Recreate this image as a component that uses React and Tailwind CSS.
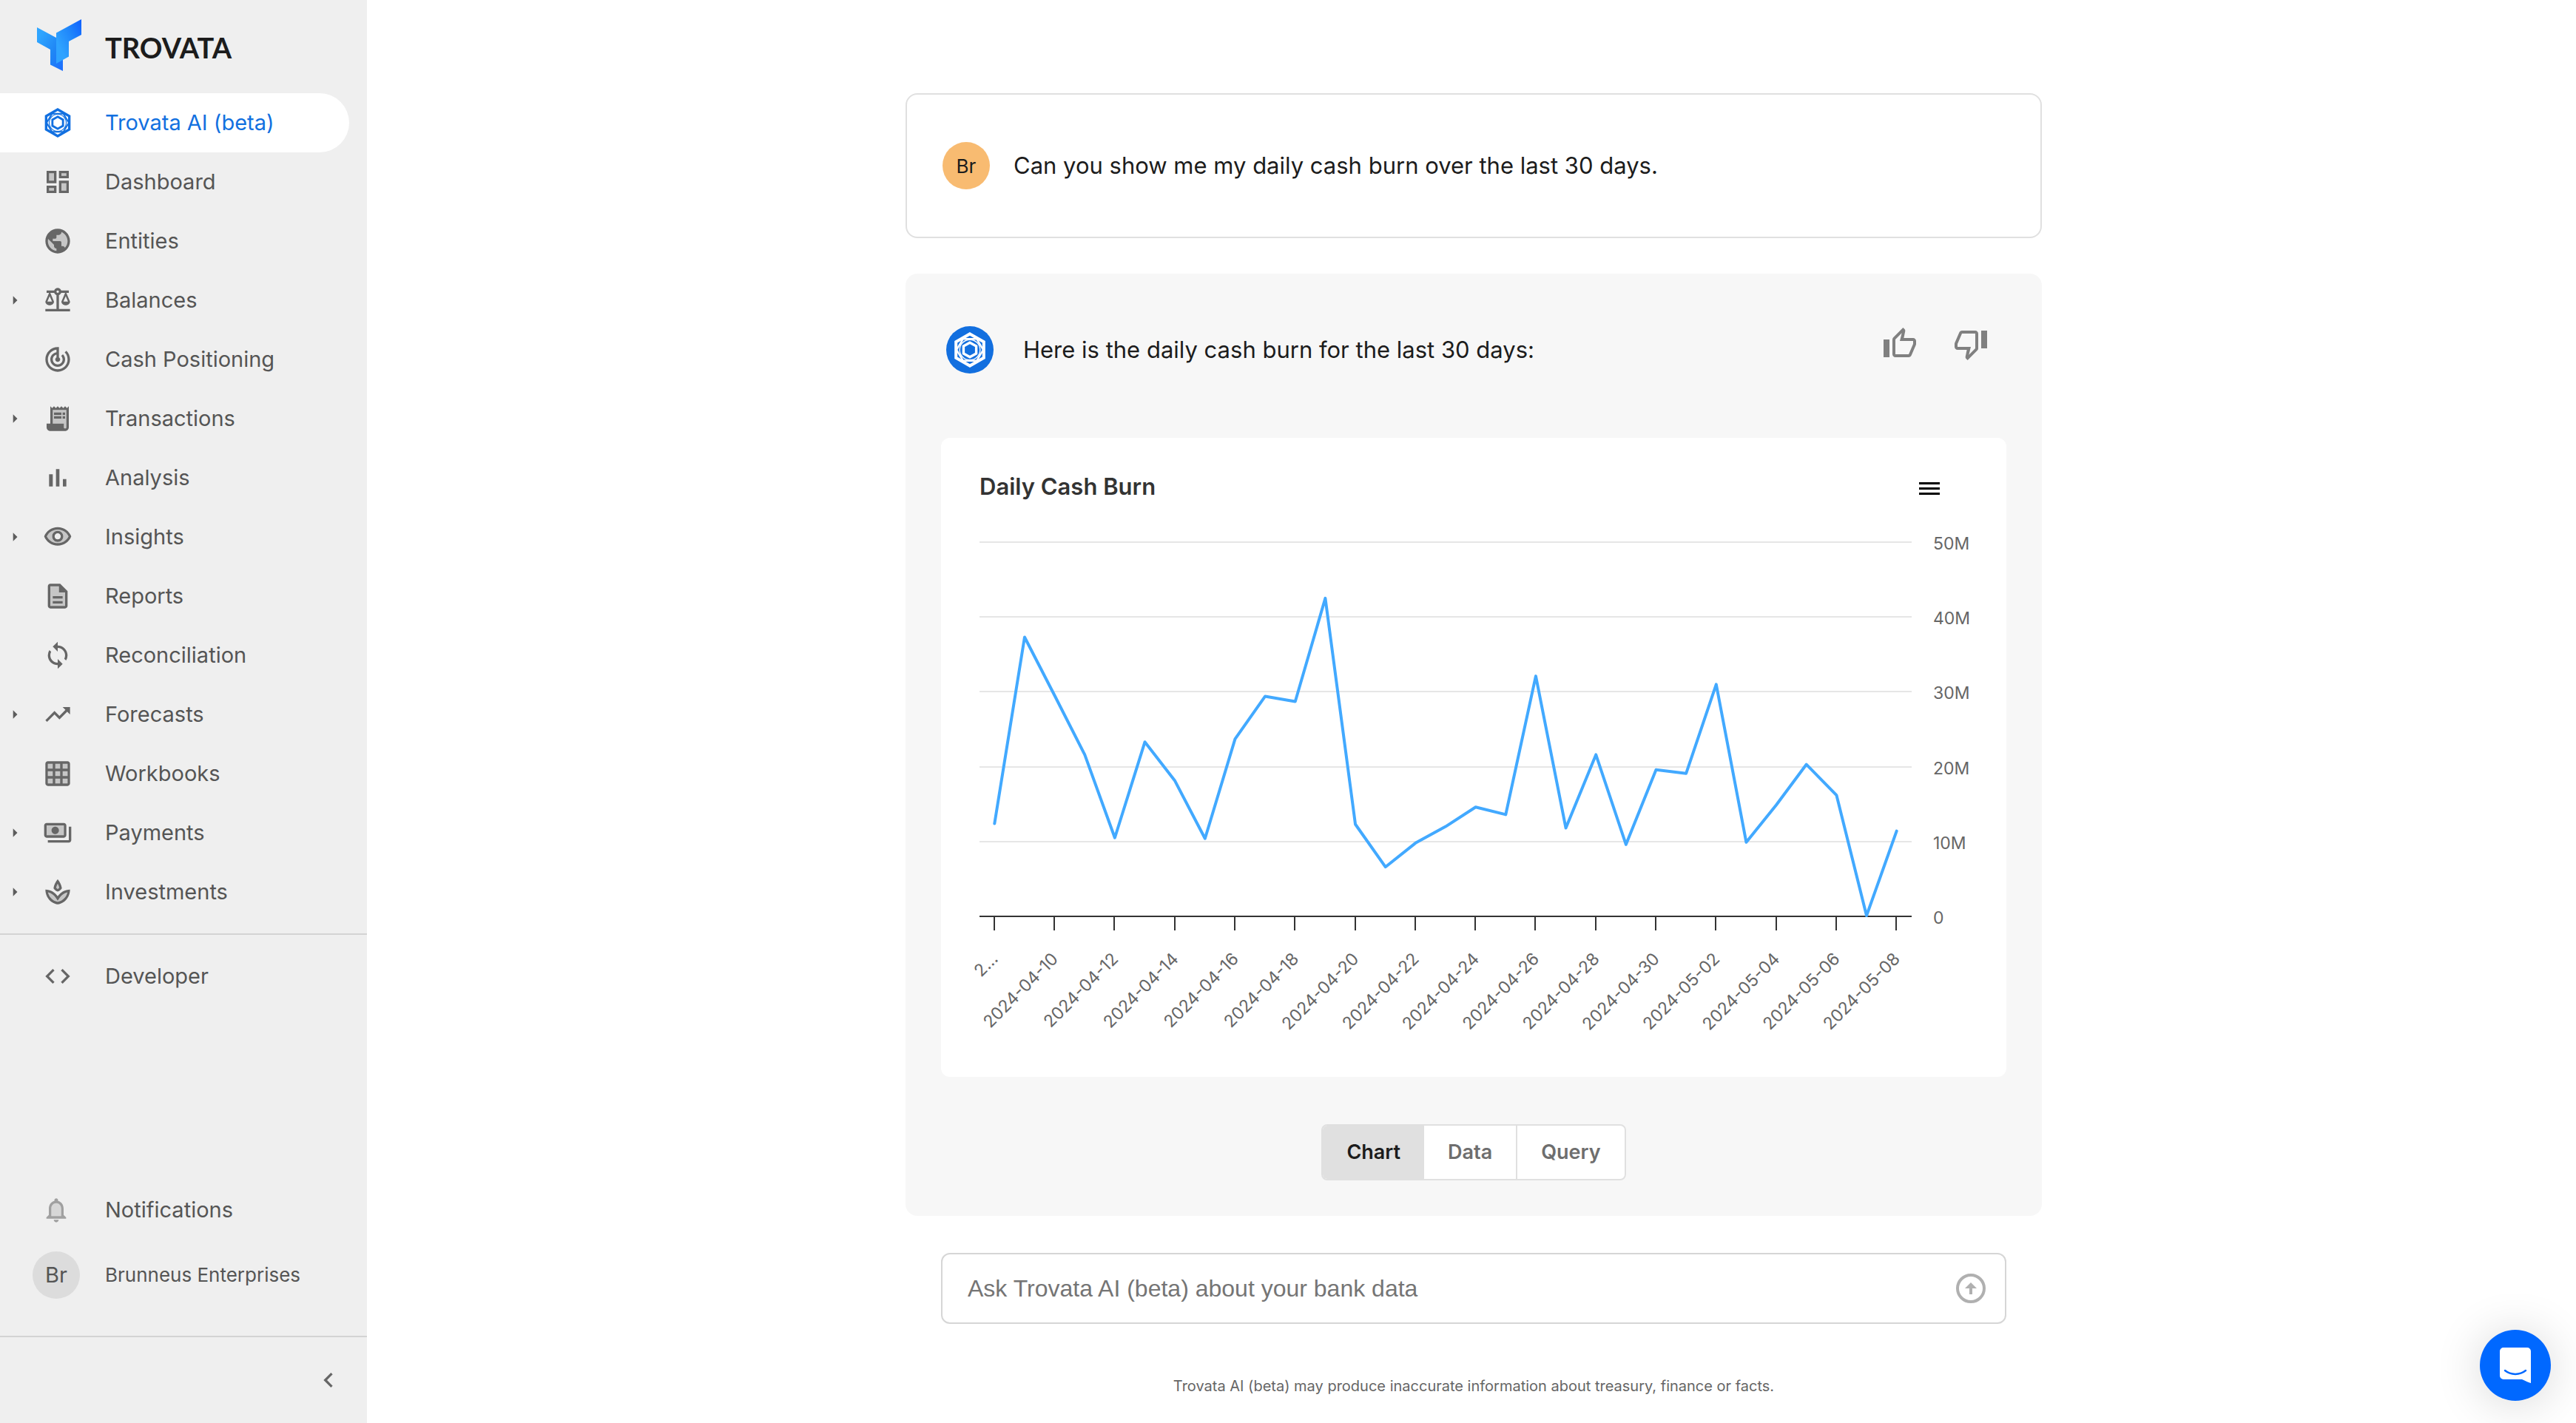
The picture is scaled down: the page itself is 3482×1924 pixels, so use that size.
import { useState } from 'react'
import {
    MdArrowRight,
    MdChevronLeft,
    MdCode,
    MdOutlineThumbDown,
    MdOutlineThumbUp,
    MdSync,
    MdTrackChanges,
    MdTrendingUp,
} from 'react-icons/md'

// Two tone icons on a 24px grid, "tone" is the light layer under "path"
const icons = {
    dashboard: {
        tone: 'M5 5h4v6H5zM15 5h4v2h-4zM15 13h4v6h-4zM5 17h4v2H5z',
        path: 'M19 5v2h-4V5h4M9 5v6H5V5h4m10 8v6h-4v-6h4M9 17v2H5v-2h4M21 3h-8v6h8V3zM11 3H3v10h8V3zm10 8h-8v10h8V11zm-10 4H3v6h8v-6z',
    },
    entities: {
        tone: 'M12 3a9 9 0 100 18 9 9 0 000-18z',
        path: 'M12 2C6.48 2 2 6.48 2 12s4.48 10 10 10 10-4.48 10-10S17.52 2 12 2zm-1 17.93c-3.95-.49-7-3.85-7-7.93 0-.62.08-1.21.21-1.79L9 15v1c0 1.1.9 2 2 2v1.93zm6.9-2.54c-.26-.81-1-1.39-1.9-1.39h-1v-3c0-.55-.45-1-1-1H8v-2h2c.55 0 1-.45 1-1V7h2c1.1 0 2-.9 2-2v-.41c2.93 1.19 5 4.06 5 7.41 0 2.08-.8 3.97-2.1 5.39z',
    },
    balances: {
        path: 'M13 7.83c.85-.3 1.53-.98 1.83-1.83H18l-3 7c0 1.66 1.57 3 3.5 3s3.5-1.34 3.5-3l-3-7h2V4h-6.17C14.42 2.83 13.31 2 12 2s-2.42.83-2.83 2H3v2h2l-3 7c0 1.66 1.57 3 3.5 3S9 14.66 9 13L6 6h3.17c.3.85.98 1.53 1.83 1.83V19H2v2h20v-2h-9V7.83zM20.37 13h-3.74l1.87-4.36L20.37 13zm-13 0H3.63L5.5 8.64 7.37 13zM12 6c-.55 0-1-.45-1-1s.45-1 1-1 1 .45 1 1-.45 1-1 1z',
    },
    transactions: {
        tone: 'M8 5h11v14c0 .55-.45 1-1 1s-1-.45-1-1v-3H8z',
        path: 'M19.5 3.5L18 2l-1.5 1.5L15 2l-1.5 1.5L12 2l-1.5 1.5L9 2 7.5 3.5 6 2v14H3v3c0 1.66 1.34 3 3 3h12c1.66 0 3-1.34 3-3V2l-1.5 1.5zM19 19c0 .55-.45 1-1 1s-1-.45-1-1v-3H8V5h11v14zM9 7h6v2H9zM16 7h2v2h-2zM9 10h6v2H9zM16 10h2v2h-2z',
    },
    analysis: {
        path: 'M5 9.2h3V19H5zM10.6 5h2.8v14h-2.8zM16.2 13H19v6h-2.8z',
    },
    insights: {
        tone: 'M12 6c-3.79 0-7.17 2.13-8.82 5.5C4.83 14.87 8.21 17 12 17s7.17-2.13 8.82-5.5C19.17 8.13 15.79 6 12 6zm0 10c-2.48 0-4.5-2.02-4.5-4.5S9.52 7 12 7s4.5 2.02 4.5 4.5S14.48 16 12 16z',
        path: 'M12 4C7 4 2.73 7.11 1 11.5 2.73 15.89 7 19 12 19s9.27-3.11 11-7.5C21.27 7.11 17 4 12 4zm0 13c-3.79 0-7.17-2.13-8.82-5.5C4.83 8.13 8.21 6 12 6s7.17 2.13 8.82 5.5C19.17 14.87 15.79 17 12 17zm0-10c-2.48 0-4.5 2.02-4.5 4.5S9.52 16 12 16s4.5-2.02 4.5-4.5S14.48 7 12 7zm0 7c-1.38 0-2.5-1.12-2.5-2.5S10.62 9 12 9s2.5 1.12 2.5 2.5S13.38 14 12 14z',
    },
    reports: {
        tone: 'M13 4H6v16h12V9h-5z',
        path: 'M8 16h8v2H8zm0-4h8v2H8zm6-10H6c-1.1 0-2 .9-2 2v16c0 1.1.89 2 1.99 2H18c1.1 0 2-.9 2-2V8l-6-6zm4 18H6V4h7v5h5v11z',
    },
    workbooks: {
        tone: 'M4 4h16v16H4z',
        path: 'M20 2H4c-1.1 0-2 .9-2 2v16c0 1.1.9 2 2 2h16c1.1 0 2-.9 2-2V4c0-1.1-.9-2-2-2zM8 20H4v-4h4v4zm0-6H4v-4h4v4zm0-6H4V4h4v4zm6 12h-4v-4h4v4zm0-6h-4v-4h4v4zm0-6h-4V4h4v4zm6 12h-4v-4h4v4zm0-6h-4v-4h4v4zm0-6h-4V4h4v4z',
    },
    payments: {
        tone: 'M3 6h14v8H3z',
        path: 'M19 14V6c0-1.1-.9-2-2-2H3c-1.1 0-2 .9-2 2v8c0 1.1.9 2 2 2h14c1.1 0 2-.9 2-2zm-2 0H3V6h14v8zm-7-7c-1.66 0-3 1.34-3 3s1.34 3 3 3 3-1.34 3-3-1.34-3-3-3zm13 0v11c0 1.1-.9 2-2 2H4v-2h17V7h2z',
    },
    investments: {
        tone: 'M4.2 11.2c3.6.7 6.4 2.9 7.8 6 1.4-3.1 4.2-5.3 7.8-6-.6 4.7-3.6 8-7.8 9-4.2-1-7.2-4.3-7.8-9zM12 5c-.9 1.3-1.5 2.6-1.6 3.9l1.6 1.3 1.6-1.3C13.5 7.6 12.9 6.3 12 5z',
        path: 'M12 1.6C10.1 3.9 9 6.4 8.6 9c.5.9 1.7 2.2 3.4 2.7 1.7-.5 2.9-1.8 3.4-2.7-.4-2.6-1.5-5.1-3.4-7.4zm0 3.6c.7 1.2 1.1 2.3 1.3 3.4L12 9.8l-1.3-1.2c.2-1.1.6-2.2 1.3-3.4zM12 15.5C9.9 12.3 6.2 10 2 10c0 5.3 3.2 9.8 7.6 11.4.8.3 1.6.5 2.4.6.8-.1 1.6-.3 2.4-.6C18.8 19.8 22 15.3 22 10c-4.2 0-7.9 2.3-10 5.5zm1.7 4c-.6.2-1.1.4-1.7.5-.6-.1-1.2-.3-1.7-.5-3.1-1.1-5.4-3.9-6.1-7.2 2.6.6 4.8 2.2 6.2 4.3L12 19l1.6-2.4c1.4-2.1 3.7-3.7 6.2-4.3-.7 3.3-3 6.1-6.1 7.2z',
    },
    notifications: {
        tone: 'M12 6c-2.48 0-4 2.02-4 4.5V17h8v-6.5C16 8.02 14.48 6 12 6z',
        path: 'M12 22c1.1 0 2-.9 2-2h-4c0 1.1.9 2 2 2zm6-6v-5c0-3.07-1.64-5.64-4.5-6.32V4c0-.83-.67-1.5-1.5-1.5s-1.5.67-1.5 1.5v.68C7.63 5.36 6 7.92 6 11v5l-2 2v1h16v-1l-2-2zm-2 1H8v-6c0-2.48 1.51-4.5 4-4.5s4 2.02 4 4.5v6z',
    },
}

const navItems = [
    { label: 'Trovata AI (beta)', icon: 'ai', active: true },
    { label: 'Dashboard', icon: 'dashboard' },
    { label: 'Entities', icon: 'entities' },
    { label: 'Balances', icon: 'balances', expandable: true },
    { label: 'Cash Positioning', Icon: MdTrackChanges },
    { label: 'Transactions', icon: 'transactions', expandable: true },
    { label: 'Analysis', icon: 'analysis' },
    { label: 'Insights', icon: 'insights', expandable: true },
    { label: 'Reports', icon: 'reports' },
    { label: 'Reconciliation', Icon: MdSync },
    { label: 'Forecasts', Icon: MdTrendingUp, expandable: true },
    { label: 'Workbooks', icon: 'workbooks' },
    { label: 'Payments', icon: 'payments', expandable: true },
    { label: 'Investments', icon: 'investments', expandable: true },
]

// Daily burn in millions, 2024-04-08 to 2024-05-08
const burn = [
    12.4, 37.3, 29.5, 21.6, 10.5, 23.3, 18.1, 10.4, 23.7, 29.4, 28.7, 42.5, 12.3, 6.6, 9.8, 12,
    14.6, 13.6, 32.1, 11.8, 21.6, 9.6, 19.6, 19.1, 31, 9.9, 14.9, 20.3, 16.2, 0.1, 11.4,
]

const ticks = [
    '2…', '2024-04-10', '2024-04-12', '2024-04-14', '2024-04-16', '2024-04-18', '2024-04-20', '2024-04-22',
    '2024-04-24', '2024-04-26', '2024-04-28', '2024-04-30', '2024-05-02', '2024-05-04', '2024-05-06', '2024-05-08',
]

const tabs = ['Chart', 'Data', 'Query']

function TwoToneIcon({ name, className }) {
    const { tone, path } = icons[name]
    return (
        <svg viewBox="0 0 24 24" fill="currentColor" className={className} aria-hidden="true">
            {tone && <path d={tone} opacity="0.3" />}
            <path d={path} />
        </svg>
    )
}

function AiIcon({ className }) {
    return (
        <svg viewBox="0 0 24 24" fill="none" stroke="currentColor" className={className} aria-hidden="true">
            <path d="M12 1.2l9.4 5.4v10.8L12 22.8l-9.4-5.4V6.6z" strokeWidth="2" />
            <path d="M7.4 4.6h9.2L21 12l-4.400 7.400H7.400L3 12z" strokeWidth="1.200" />
            <circle cx="12" cy="12" r="6.900" strokeWidth="0.700" />
            <path d="M12 7.100l4.300 2.450v4.900L12 16.900l-4.300-2.450v-4.900z" strokeWidth="1.700" />
        </svg>
    )
}

function Logo() {
    return (
        <svg viewBox="0 0 60 70" className="h-[70px] w-[60px] shrink-0" aria-hidden="true">
            <defs>
                <linearGradient id="logo-left" x1="0" y1="0" x2="1" y2="1">
                    <stop offset="0.15" stopColor="#2fa5ff" />
                    <stop offset="0.6" stopColor="#1f86f5" />
                    <stop offset="1" stopColor="#1d6dff" />
                </linearGradient>
                <linearGradient id="logo-right" x1="0.2" y1="0.7" x2="1" y2="0">
                    <stop offset="0" stopColor="#2fa3ff" />
                    <stop offset="0.5" stopColor="#1f86fb" />
                    <stop offset="1" stopColor="#0f5fff" />
                </linearGradient>
            </defs>
            <path d="M0 11l26 14v31l9-3v17l-17-8.5V41L0 31z" fill="url(#logo-left)" />
            <path d="M60 0v21L43 30v20.5L26 60V18.5z" fill="url(#logo-right)" />
        </svg>
    )
}

function NavItem({ item }) {
    const { label, icon, Icon, active, expandable } = item
    return (
        <li>
            <a
                href="#"
                className={
                    active
                        ? 'mr-6 flex h-20 items-center rounded-r-full bg-white text-[#1270e0]'
                        : 'mr-6 flex h-20 items-center text-[#555555]'
                }
            >
                <span className="flex w-[58px] justify-start pl-1.5 text-[#5c5c5c]">
                    {expandable && <MdArrowRight className="h-7 w-7" />}
                </span>
                <span className={active ? 'text-[#1270e0]' : 'text-[#666666]'}>
                    {icon === 'ai' && <AiIcon className="h-10 w-10" />}
                    {icon && icon !== 'ai' && <TwoToneIcon name={icon} className="h-10 w-10" />}
                    {Icon && <Icon className="h-10 w-10" />}
                </span>
                <span className="pl-11">{label}</span>
            </a>
        </li>
    )
}

function Sidebar() {
    return (
        <aside className="flex w-[496px] shrink-0 flex-col bg-[#efefef] text-[29px] leading-9 text-[#555555]">
            <div className="flex h-[126px] items-start gap-8 pt-[26px] pl-[50px]">
                <Logo />
                <span className="pt-5 font-[Lato] text-[38px] font-bold text-[#1c1c1c]">TROVATA</span>
            </div>
            <nav>
                <ul>
                    {navItems.map((item) => (
                        <NavItem key={item.label} item={item} />
                    ))}
                </ul>
                <ul className="mt-4 border-t-2 border-[#d3d3d3] pt-4">
                    <NavItem item={{ label: 'Developer', Icon: MdCode }} />
                </ul>
            </nav>
            <div className="mt-auto flex flex-col gap-9 pb-[50px]">
                <a href="#" className="flex items-center pl-14">
                    <TwoToneIcon name="notifications" className="h-10 w-10 text-[#a0a0a0]" />
                    <span className="pl-[46px]">Notifications</span>
                </a>
                <a href="#" className="flex items-center pl-11 text-[26px]">
                    <span className="flex h-16 w-16 items-center justify-center rounded-full bg-[#dcdcdc] text-[29px]">Br</span>
                    <span className="pl-[34px]">Brunneus Enterprises</span>
                </a>
            </div>
            <div className="flex h-[118px] items-center justify-end border-t-2 border-[#d3d3d3] pr-8">
                <button type="button" aria-label="Collapse menu" className="text-[#666666]">
                    <MdChevronLeft className="h-10 w-10" />
                </button>
            </div>
        </aside>
    )
}

function BurnChart() {
    // Plot area: x 52 to 1312, zero line at y 535, 50M at y 29
    const step = 1260 / burn.length
    const xAt = (i) => 52 + step * (i + 0.5)
    const yAt = (v) => 535 - v * 10.12
    const points = burn.map((v, i) => `${xAt(i)},${yAt(v)}`).join(' ')

    return (
        <svg viewBox="0 0 1440 752" className="block w-full" role="img" aria-label="Daily Cash Burn">
            {[10, 20, 30, 40, 50].map((v) => (
                <path key={v} d={`M52 ${Math.round(yAt(v))}H1312`} stroke="#e6e6e6" strokeWidth="2" />
            ))}
            <path d="M52 535H1312" stroke="#333333" strokeWidth="2" />
            {ticks.map((label, i) => (
                <path key={label} d={`M${Math.floor(xAt(i * 2))} 535v19`} stroke="#333333" strokeWidth="2" />
            ))}
            <polyline points={points} fill="none" stroke="#42a9ff" strokeWidth="4" strokeLinejoin="round" strokeLinecap="round" />
            <g fill="#666666" fontSize="23">
                {[0, 10, 20, 30, 40, 50].map((v) => (
                    <text key={v} x="1341" y={yAt(v) + 10}>
                        {v === 0 ? '0' : `${v}M`}
                    </text>
                ))}
                {ticks.map((label, i) => (
                    <text key={label} textAnchor="end" transform={`translate(${xAt(i * 2) + 6} 594) rotate(-45)`}>
                        {label}
                    </text>
                ))}
            </g>
        </svg>
    )
}

export default function App() {
    const [tab, setTab] = useState('Chart')
    const [question, setQuestion] = useState('')

    return (
        <div className="flex min-h-screen bg-white font-[Inter,sans-serif] text-[#1c1c1c]">
            <Sidebar />
            <main className="flex min-w-0 flex-1 flex-col items-center pt-[126px] pl-1.5">
                <div className="flex w-full max-w-[1536px] flex-col gap-12">
                    <section className="flex h-[196px] items-center gap-8 rounded-2xl border-2 border-[#e0e0e0] px-12">
                        <span className="flex h-16 w-16 items-center justify-center rounded-full bg-[#f8bb71] text-[26px]">Br</span>
                        <p className="text-[31px] leading-10">Can you show me my daily cash burn over the last 30 days.</p>
                    </section>

                    <section className="rounded-2xl bg-[#f7f7f7] px-12 pb-12">
                        <div className="flex h-[222px] items-start justify-between pt-[71px] pr-6 pl-[7px]">
                            <div className="flex items-center gap-10">
                                <span className="flex h-16 w-16 items-center justify-center rounded-full bg-[#126fdf] text-white">
                                    <AiIcon className="h-12 w-12" />
                                </span>
                                <p className="text-[31px] leading-10">Here is the daily cash burn for the last 30 days:</p>
                            </div>
                            <div className="flex gap-12 text-[#808080]">
                                <button type="button" aria-label="Good answer">
                                    <MdOutlineThumbUp className="h-12 w-12" />
                                </button>
                                <button type="button" aria-label="Bad answer">
                                    <MdOutlineThumbDown className="h-12 w-12" />
                                </button>
                            </div>
                        </div>

                        <div className="rounded-xl bg-white">
                            <div className="flex items-center justify-between pt-[42px] pr-[90px] pb-[22px] pl-[52px]">
                                <h2 className="text-[31px] leading-[48px] font-semibold text-[#333333]">Daily Cash Burn</h2>
                                <button type="button" aria-label="Chart menu" className="flex w-7 flex-col gap-1 pt-1">
                                    <span className="h-[3px] bg-black" />
                                    <span className="h-[3px] bg-black" />
                                    <span className="h-[3px] bg-black" />
                                </button>
                            </div>
                            <BurnChart />
                        </div>

                        <div className="mt-16 flex justify-center">
                            <div className="flex h-[76px] overflow-hidden rounded-lg border-2 border-[#e0e0e0] bg-white">
                                {tabs.map((name, i) => (
                                    <button
                                        key={name}
                                        type="button"
                                        onClick={() => setTab(name)}
                                        className={[
                                            'px-8 text-[27px] font-semibold',
                                            i === 2 ? 'border-l-2 border-[#e0e0e0]' : '',
                                            tab === name ? 'bg-[#e0e0e0] text-[#1c1c1c]' : 'text-[#6e6e6e]',
                                        ].join(' ')}
                                    >
                                        {name}
                                    </button>
                                ))}
                            </div>
                        </div>
                    </section>
                </div>

                <form
                    className="mt-[50px] flex h-24 w-full max-w-[1440px] items-center rounded-xl border-2 border-[#d6d6d6] pr-[22px] pl-[34px]"
                    onSubmit={(e) => e.preventDefault()}
                >
                    <input
                        type="text"
                        aria-label="Ask Trovata AI (beta) about your bank data"
                        placeholder="Ask Trovata AI (beta) about your bank data"
                        value={question}
                        onChange={(e) => setQuestion(e.target.value)}
                        className="h-full min-w-0 flex-1 bg-transparent font-['Liberation_Sans',sans-serif] text-[32px] outline-none placeholder:text-[#757575]"
                    />
                    <button type="submit" aria-label="Send" className="text-[#b0b0b0]">
                        <svg viewBox="0 0 24 24" className="h-12 w-12" aria-hidden="true">
                            <circle cx="12" cy="12" r="9" fill="none" stroke="currentColor" strokeWidth="2" />
                            <path d="M12 8l4 4h-3v4h-2v-4H8z" fill="currentColor" />
                        </svg>
                    </button>
                </form>
                <p className="mt-[72px] text-xl leading-6 text-[#666666]">
                    Trovata AI (beta) may produce inaccurate information about treasury, finance or facts.
                </p>
            </main>

            <button
                type="button"
                aria-label="Open chat"
                className="fixed right-[34px] bottom-[30px] flex h-24 w-24 items-center justify-center rounded-full bg-[#0068ff] shadow-[0_4px_64px_rgba(0,0,0,0.16)]"
            >
                <svg viewBox="0 0 42 48" className="h-12 w-[42px]" aria-hidden="true">
                    <path d="M5 0h32a5 5 0 015 5v43s-6-2-12-5H5a5 5 0 01-5-5V5a5 5 0 015-5z" fill="#ffffff" />
                    <path d="M7 31c8 6.500 20 6.500 28 0" fill="none" stroke="#0068ff" strokeWidth="2.500" strokeLinecap="round" />
                </svg>
            </button>
        </div>
    )
}
